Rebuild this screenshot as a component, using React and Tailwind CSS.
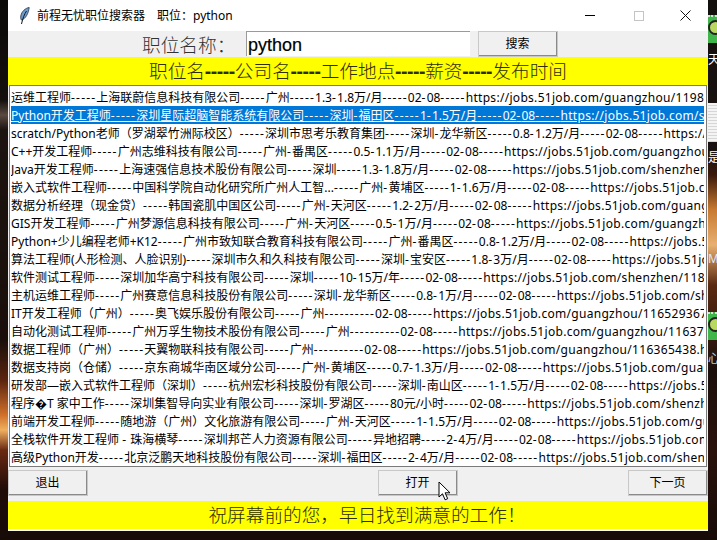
const rows = [
  '运维工程师-----上海联蔚信息科技有限公司-----广州-----1.3-1.8万/月-----02-08-----https://jobs.51job.com/guangzhou/119805',
  'Python开发工程师-----深圳星际超脑智能系统有限公司-----深圳-福田区-----1-1.5万/月-----02-08-----https://jobs.51job.com/shenzhen',
  'scratch/Python老师（罗湖翠竹洲际校区）-----深圳市思考乐教育集团-----深圳-龙华新区-----0.8-1.2万/月-----02-08-----https://jobs',
  'C++开发工程师-----广州志维科技有限公司-----广州-番禺区-----0.5-1.1万/月-----02-08-----https://jobs.51job.com/guangzhou',
  'Java开发工程师-----上海速强信息技术股份有限公司-----深圳-----1.3-1.8万/月-----02-08-----https://jobs.51job.com/shenzhen',
  '嵌入式软件工程师-----中国科学院自动化研究所广州人工智...-----广州-黄埔区-----1-1.6万/月-----02-08-----https://jobs.51job.com',
  '数据分析经理（现金贷）-----韩国瓷肌中国区公司-----广州-天河区-----1.2-2万/月-----02-08-----https://jobs.51job.com/guangzhou',
  'GIS开发工程师-----广州梦源信息科技有限公司-----广州-天河区-----0.5-1万/月-----02-08-----https://jobs.51job.com/guangzhou',
  'Python+少儿编程老师+K12-----广州市致知联合教育科技有限公司-----广州-番禺区-----0.8-1.2万/月-----02-08-----https://jobs.51job',
  '算法工程师(人形检测、人脸识别)-----深圳市久和久科技有限公司-----深圳-宝安区-----1.8-3万/月-----02-08-----https://jobs.51job.com',
  '软件测试工程师-----深圳加华高宁科技有限公司-----深圳-----10-15万/年-----02-08-----https://jobs.51job.com/shenzhen/118100',
  '主机运维工程师-----广州赛意信息科技股份有限公司-----深圳-龙华新区-----0.8-1万/月-----02-08-----https://jobs.51job.com/shenzhen',
  'IT开发工程师（广州）-----奥飞娱乐股份有限公司-----广州----------02-08-----https://jobs.51job.com/guangzhou/116529367.html',
  '自动化测试工程师-----广州万孚生物技术股份有限公司-----广州----------02-08-----https://jobs.51job.com/guangzhou/116373000',
  '数据工程师（广州）-----天翼物联科技有限公司-----广州----------02-08-----https://jobs.51job.com/guangzhou/116365438.html',
  '数据支持岗（仓储）-----京东商城华南区域分公司-----广州-黄埔区-----0.7-1.3万/月-----02-08-----https://jobs.51job.com/guangzhou',
  '研发部—嵌入式软件工程师（深圳）-----杭州宏杉科技股份有限公司-----深圳-南山区-----1-1.5万/月-----02-08-----https://jobs.51job.com',
  '程序�T 家中工作-----深圳集智导向实业有限公司-----深圳-罗湖区-----80元/小时-----02-08-----https://jobs.51job.com/shenzhen',
  '前端开发工程师-----随地游（广州）文化旅游有限公司-----广州-天河区-----1-1.5万/月-----02-08-----https://jobs.51job.com/guangzhou',
  '全栈软件开发工程师 - 珠海横琴-----深圳邦芒人力资源有限公司-----异地招聘-----2-4万/月-----02-08-----https://jobs.51job.com',
  '高级Python开发-----北京泛鹏天地科技股份有限公司-----深圳-福田区-----2-4万/月-----02-08-----https://jobs.51job.com/shenzhen',
]

// hyphens and urls run wider in the reference than in Noto Sans, so they get their own spans
function RowText({ text }) {
  return text.split(/(-+|https:\S+)/).map((part, i) => {
    if (part.startsWith('-')) return <span key={i} className="tracking-[1.2px]">{part}</span>
    if (part.startsWith('https')) return <span key={i} className="tracking-[0.3px]">{part}</span>
    return <span key={i}>{part}</span>
  })
}

function TkButton({ label, className, children }) {
  return (
    <button className={`relative h-[26px] w-[80px] shrink-0 bg-[#f0f0f0] border-t border-l border-t-white border-l-white border-r-2 border-b-2 border-r-[#8a8a8a] border-b-[#8a8a8a] text-[12px] text-black outline outline-1 -outline-offset-1 outline-[#c8c8c8] ${className || ''}`}>
      {label}
      {children}
    </button>
  )
}

function Feather() {
  return (
    <svg width="10" height="18" viewBox="0 0 10 18" className="mr-[7px] shrink-0">
      <path d="M9.2.5C5.5 1 1.5 4.5.8 9c-.3 1.8 0 3.2.6 4C5.5 12 8.5 6.5 9.2.5z" fill="#6f9ccc" stroke="#22344a" strokeWidth="0.8" />
      <path d="M6.5 4C4.5 7 2.8 11 1.5 17" fill="none" stroke="#10181f" strokeWidth="1" />
    </svg>
  )
}

function GreenIcon({ className }) {
  return (
    <div className={`absolute left-0 h-[28px] w-[9px] overflow-hidden border-t-2 border-dotted border-t-[#dddddd] bg-[#3fb54a] ${className}`}>
      <div className="mt-[3px] h-[15px] w-[15px] rounded-full border-2 border-[#222] bg-[#b8d860]" />
    </div>
  )
}

export default function App() {
  return (
    <div className="relative flex h-[540px] w-[717px] overflow-hidden bg-[#170b08] font-['Noto_Sans','Noto_Sans_CJK_SC',sans-serif]">
      <div className="h-[540px] w-[8px] shrink-0 bg-[linear-gradient(to_bottom,#0a0908_0px,#14100e_100px,#5a4a40_115px,#1c1410_130px,#1a0f0a_340px,#5a2410_380px,#d0702a_415px,#f0b060_430px,#6a2a12_450px,#1e0c08_490px,#170b08_540px)]" />

      <div className="flex h-[531px] w-[700px] shrink-0 flex-col bg-white">
        <div className="flex h-[31px] shrink-0 items-center pl-[12px] text-[12px] text-black">
          <Feather />
          <span>前程无忧职位搜索器</span>
          <span className="ml-[12px]">职位：python</span>
          <div className="ml-auto flex items-center">
            <div className="mr-[39px] h-px w-[10px] bg-black" />
            <div className="mr-[36px] h-[10px] w-[10px] border border-[#c4c4c4]" />
            <svg width="11" height="11" viewBox="0 0 11 11" className="mr-[17px]">
              <path d="M.5.5l10 10M10.5.5l-10 10" stroke="#111" strokeWidth="1" />
            </svg>
          </div>
        </div>

        <div className="flex h-[470px] flex-col bg-[#f0f0f0]">
          <div className="flex h-[26px] shrink-0">
            <span className="ml-[134px] w-[104px] pt-[1px] text-[18.67px] font-light leading-[26px] text-[#333333]">职位名称：</span>
            <div className="h-[25px] w-[224px] border-t border-l border-[#9a9a9a] bg-white pl-[1px] pt-[1px] font-['Liberation_Sans',sans-serif] text-[18px] leading-[24px] text-black [-webkit-text-stroke:0.2px_black]">python</div>
            <TkButton label="搜索" className="ml-[8px]" />
          </div>

          <div className="h-[28px] shrink-0 bg-[#ffff00] text-center text-[18.67px] font-light leading-[28px] text-[#2e2e00]">
            职位名<span className="font-bold">-----</span>公司名<span className="font-bold">-----</span>工作地点<span className="font-bold">-----</span>薪资<span className="font-bold">-----</span>发布时间
          </div>

          <div className="mx-[1px] h-[382px] w-[698px] shrink-0 overflow-hidden border border-[#7a7a7a] bg-white pb-[1px] pl-[1px] pr-[2px] pt-[2px] text-[12px] leading-[20px] text-black">
            {rows.map((r, i) => (
              <div
                key={i}
                className={i === 1
                  ? 'h-[18px] overflow-hidden whitespace-nowrap bg-[#0078d7] text-white underline'
                  : 'h-[18px] overflow-hidden whitespace-nowrap'}
              >
                <RowText text={r} />
              </div>
            ))}
          </div>

          <div className="mt-[3px] flex">
            <TkButton label="退出" />
            <TkButton label="打开" className="ml-[290px]">
              <svg width="14" height="20" viewBox="0 0 14 20" className="absolute left-[59px] top-[10px]">
                <path d="M1 1v15l3.5-3.2 2.6 6 2.6-1.1-2.6-5.9H12z" fill="#fff" stroke="#000" strokeWidth="1" />
              </svg>
            </TkButton>
            <TkButton label="下一页" className="ml-auto" />
          </div>
        </div>

        <div className="h-[28px] shrink-0 bg-[#ffff00] pl-[18px] text-center text-[18.67px] font-light leading-[28px] text-[#2e2e00]">
          祝屏幕前的您，早日找到满意的工作！
        </div>
      </div>

      {/* desktop showing past the window edge: icons and their cut off labels */}
      <div className="relative h-[540px] w-[9px] shrink-0 overflow-hidden whitespace-nowrap bg-[linear-gradient(to_bottom,#14100e_0px,#1a1210_150px,#3a1a0c_175px,#c87a30_210px,#e8b070_245px,#5a2a12_285px,#1c100c_370px,#2a120c_450px,#170b08_540px)] text-[12px] leading-[14px] text-white">
        <GreenIcon className="top-[15px]" />
        <span className="absolute left-0 top-[53px]">天</span>
        <div className="absolute left-0 top-[103px] h-[39px] w-[9px] bg-[repeating-linear-gradient(to_bottom,#f4f4f4_0px,#f4f4f4_2px,#b8b8b8_3px)]" />
        <span className="absolute left-0 top-[151px]">是</span>
        <span className="absolute left-0 top-[252px] text-[#dfeaff]">My</span>
        <GreenIcon className="top-[312px]" />
        <span className="absolute left-0 top-[352px] text-[#a8d0ff]">心</span>
      </div>
    </div>
  )
}
